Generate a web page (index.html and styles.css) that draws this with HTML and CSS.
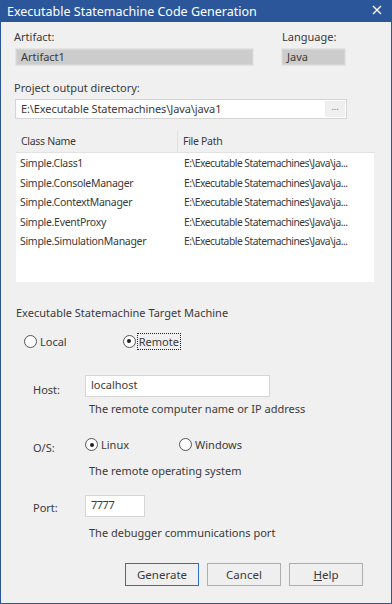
FILE: index.html
```html
<!DOCTYPE html>
<html>
<head>
<meta charset="utf-8">
<link rel="stylesheet" href="styles.css">
</head>
<body>
<div class="dialog">
  <div class="titlebar">
    <span class="title">Executable Statemachine Code Generation</span>
    <svg class="close" width="10" height="10" viewBox="0 0 10 10"><path d="M1 1 L9 9 M9 1 L1 9" stroke="#fff" stroke-width="1.4"/></svg>
  </div>
  <div class="content">
    <div class="top-row">
      <div class="field artifact">
        <div class="label">Artifact:</div>
        <div class="ro-box">Artifact1</div>
      </div>
      <div class="field language">
        <div class="label">Language:</div>
        <div class="ro-box">Java</div>
      </div>
    </div>
    <div class="label dir-label">Project output directory:</div>
    <div class="dir-input">
      <span class="dir-text">E:\Executable Statemachines\Java\java1</span>
      <span class="browse">...</span>
    </div>
    <div class="table">
      <div class="thead">
        <div class="th c1">Class Name</div>
        <div class="th c2">File Path</div>
      </div>
      <div class="tr"><div class="td c1">Simple.Class1</div><div class="td c2">E:\Executable Statemachines\Java\ja...</div></div>
      <div class="tr"><div class="td c1">Simple.ConsoleManager</div><div class="td c2">E:\Executable Statemachines\Java\ja...</div></div>
      <div class="tr"><div class="td c1">Simple.ContextManager</div><div class="td c2">E:\Executable Statemachines\Java\ja...</div></div>
      <div class="tr"><div class="td c1">Simple.EventProxy</div><div class="td c2">E:\Executable Statemachines\Java\ja...</div></div>
      <div class="tr"><div class="td c1">Simple.SimulationManager</div><div class="td c2">E:\Executable Statemachines\Java\ja...</div></div>
    </div>
    <div class="label section-label">Executable Statemachine Target Machine</div>
    <div class="radio-row target">
      <label class="radio r-local"><span class="dot"></span><span>Local</span></label>
      <label class="radio r-remote"><span class="dot on"></span><span class="focus">Remote</span></label>
    </div>
    <div class="form-row host-row">
      <div class="flabel">Host:</div>
      <div class="text-input host-input">localhost</div>
    </div>
    <div class="help">The remote computer name or IP address</div>
    <div class="form-row os-row">
      <div class="flabel">O/S:</div>
      <label class="radio r-linux"><span class="dot on"></span><span>Linux</span></label>
      <label class="radio r-win"><span class="dot"></span><span>Windows</span></label>
    </div>
    <div class="help">The remote operating system</div>
    <div class="form-row port-row">
      <div class="flabel">Port:</div>
      <div class="text-input port-input">7777</div>
    </div>
    <div class="help">The debugger communications port</div>
    <div class="buttons">
      <div class="btn primary">Generate</div>
      <div class="btn">Cancel</div>
      <div class="btn"><u>H</u>elp</div>
    </div>
  </div>
</div>
</body>
</html>
```
FILE: styles.css
```css
* { box-sizing: border-box; }
html, body { margin: 0; padding: 0; }
body {
  width: 392px;
  height: 604px;
  font-family: "Noto Sans", "Open Sans", sans-serif;
  font-size: 11px;
  color: #3a3a3a;
  background: #f0f0f0;
}
.dialog {
  width: 392px;
  height: 604px;
  border: 1px solid #2b579a;
  border-top: none;
  background: #f0f0f0;
  display: flex;
  flex-direction: column;
}
.titlebar {
  height: 22px;
  background: #2b579a;
  margin: 0 -1px;
  display: flex;
  align-items: center;
  justify-content: space-between;
  padding: 0 10px 0 7px;
  color: #fff;
  font-size: 12.5px;
}
.title { line-height: 22px; padding-top: 1px; }
.close { display: block; margin-top: -2px; }
.content {
  padding: 0 0 0 13px;
}
.label { line-height: 16px; }
.top-row {
  display: flex;
  margin-top: 7px;
}
.field .label { margin-bottom: 3px; }
.ro-box {
  height: 18px;
  background: #cccccc;
  border: 1px solid #e4e4e4;
  box-shadow: inset 0 0 0 1px #d6d6d6;
  padding-left: 5px;
  line-height: 16px;
}
.artifact { width: 240px; }
.artifact .ro-box { margin-left: 1px; }
.language { margin-left: 27px; width: 65px; }
.language .label { padding-left: 1px; }
.dir-label { margin-top: 14px; }
.dir-input {
  margin-top: 3px;
  margin-left: 1px;
  width: 332px;
  height: 20px;
  background: #fff;
  border: 1px solid #d5d5d5;
  display: flex;
  align-items: center;
  justify-content: space-between;
  padding: 0 1px 0 5px;
}
.dir-text { line-height: 18px; letter-spacing: -0.1px; }
.browse {
  width: 20px;
  height: 16px;
  background: #efefef;
  text-align: center;
  line-height: 11px;
  font-size: 9px;
  color: #6a6a9a;
}
.table {
  margin-top: 11px;
  margin-left: 2px;
  width: 358px;
  height: 152px;
  background: #fff;
  font-size: 10.5px;
  letter-spacing: -0.3px;
}
.thead {
  display: flex;
  height: 23px;
  background: #f0f0f0;
  border-bottom: 1px solid #e2e2e2;
  margin: 0 -1px 0 0;
}
.th { line-height: 22px; padding-left: 5px; }
.thead .c1 { border-right: 1px solid #e0e0e0; }
.c1 { width: 162px; }
.c2 { flex: 1; white-space: nowrap; overflow: hidden; }
.tr .c2 { letter-spacing: -0.5px; font-size: 10.3px; }
.tr { display: flex; height: 19.5px; }
.td { line-height: 19.5px; }
.tr .c1 { padding-left: 4px; }
.tr .c2 { padding-left: 6px; }
.thead + .tr { margin-top: 1px; }
.section-label { margin-top: 23px; margin-left: 2px; }
.radio {
  display: flex;
  align-items: center;
}
.dot {
  width: 13px;
  height: 13px;
  border-radius: 50%;
  border: 1px solid #555;
  background: #fff;
  position: relative;
  margin-right: 3px;
}
.dot.on::after {
  content: "";
  position: absolute;
  left: 3.5px;
  top: 3.5px;
  width: 4px;
  height: 4px;
  border-radius: 50%;
  background: #222;
}
.radio-row.target {
  display: flex;
  margin-top: 12px;
  margin-left: 10px;
  height: 16px;
}
.r-remote { margin-left: 56px; }
.focus { outline: 1px dotted #222; padding: 0 1px; line-height: 15px; margin-left: -1px; }
.form-row {
  display: flex;
  align-items: center;
  margin-left: 19px;
}
.flabel { width: 52px; }
.host-row { margin-top: 25px; }
.text-input {
  height: 22px;
  background: #fff;
  border: 1px solid #d6d6d6;
  padding: 0 5px;
  line-height: 18px;
}
.host-input { width: 185px; }
.host-row .flabel { padding-top: 8px; }
.help { margin-left: 75px; line-height: 16px; margin-top: 4px; }
.os-row { margin-top: 20px; height: 16px; align-items: flex-start; }
.os-row .flabel { padding-top: 3px; }
.r-linux { margin-left: 0; }
.r-win { margin-left: 50px; }
.os-row + .help { margin-top: 10px; }
.port-row { margin-top: 16px; }
.port-row .flabel { padding-top: 3px; }
.port-input { width: 60px; letter-spacing: -0.5px; }
.port-row + .help { margin-top: 8px; }
.buttons {
  display: flex;
  gap: 8px;
  margin-top: 22px;
  margin-left: 111px;
}
.btn {
  width: 74px;
  height: 23px;
  border: 1px solid #adadad;
  background: #efefef;
  text-align: center;
  line-height: 21px;
  font-size: 11.5px;
}
.btn.primary { border-color: #2a6fc9; }
```
